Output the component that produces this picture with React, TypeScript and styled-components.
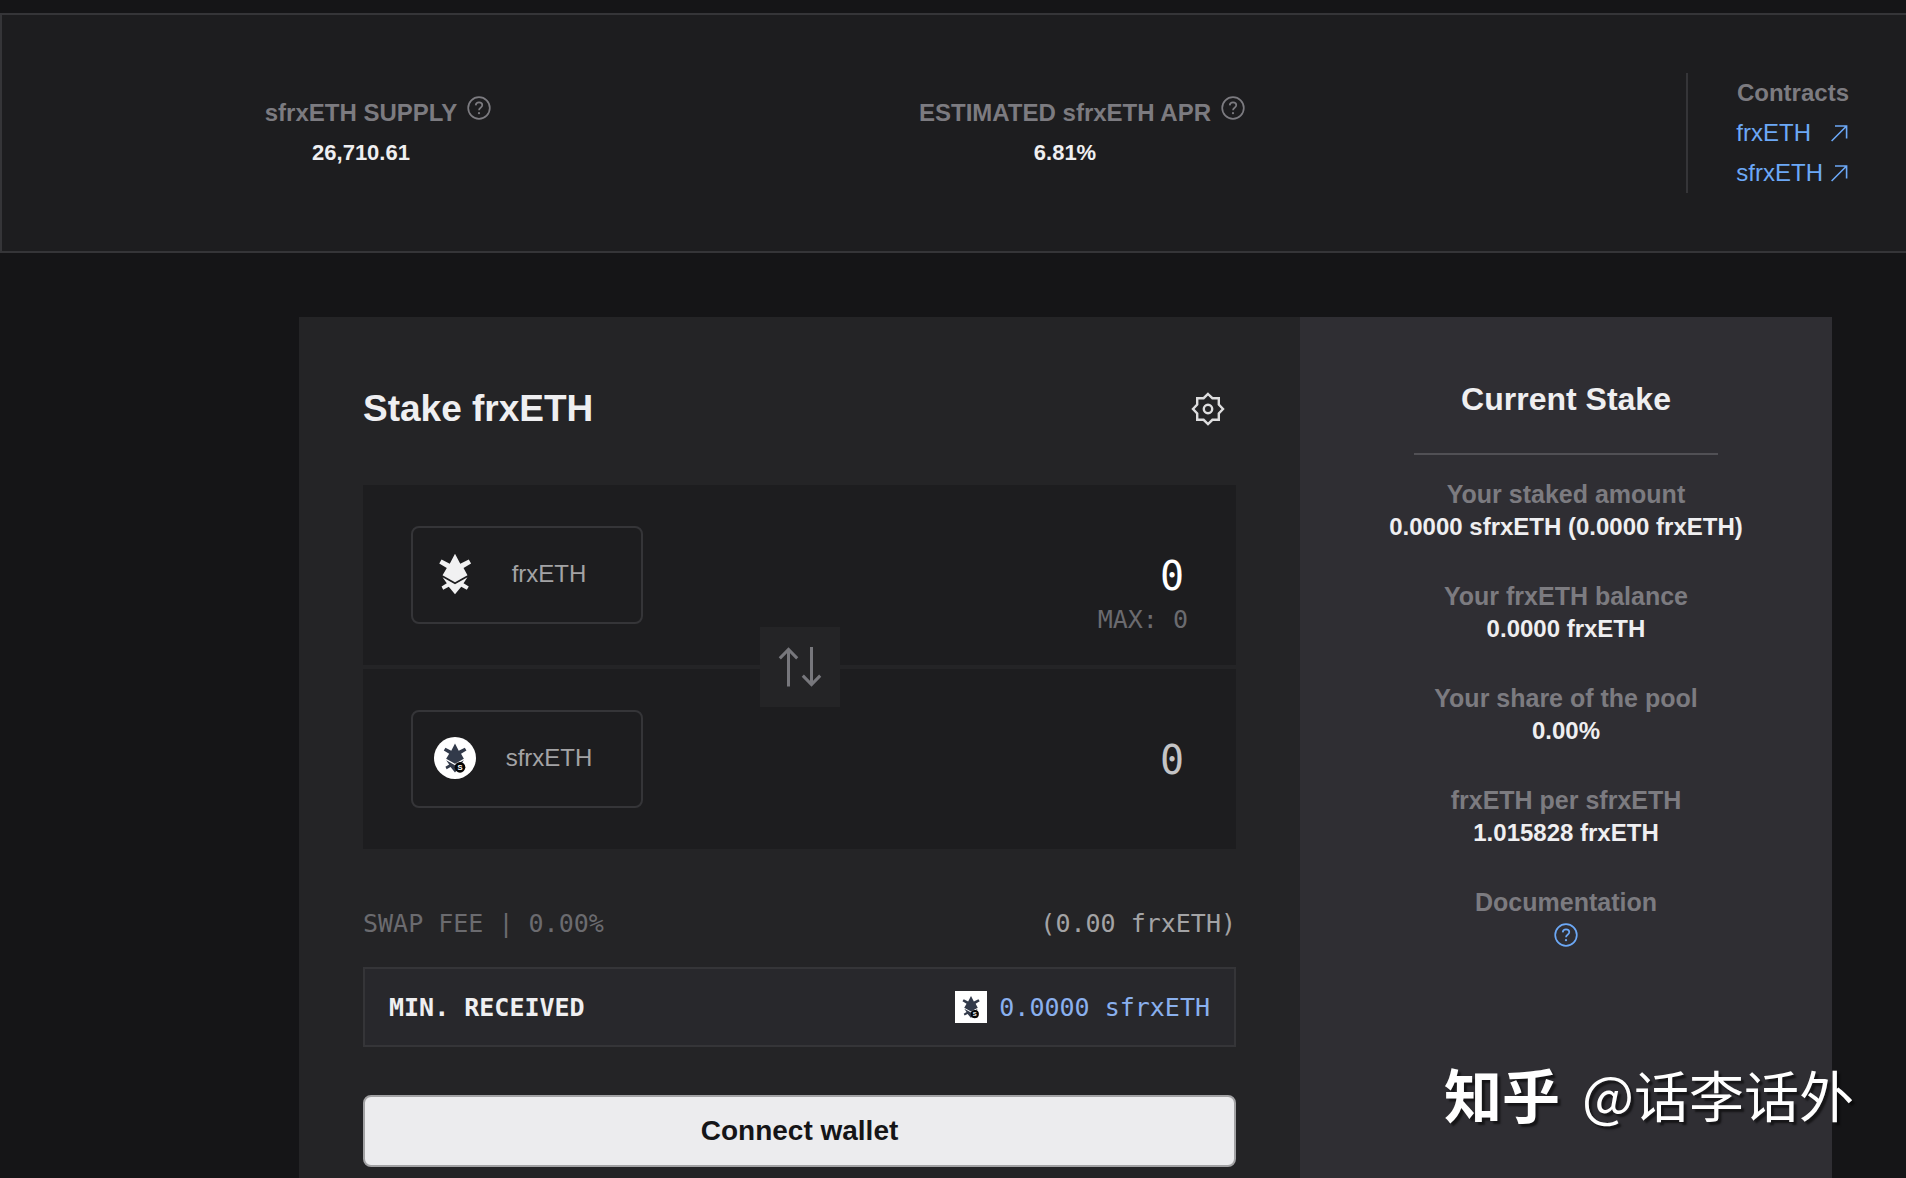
import React, { useState } from "react";
import styled, { createGlobalStyle } from "styled-components";

const sans = `"Liberation Sans", Arial, "Noto Sans CJK SC", sans-serif`;
const mono = `"DejaVu Sans Mono", "Liberation Mono", monospace`;

const color = {
  page: "#151517",
  panel: "#1d1d1f",
  card: "#242426",
  side: "#2f2e33",
  box: "#28282c",
  border: "#353538",
  rule: "#515055",
  text: "#efeff1",
  soft: "#a3a3a5",
  muted: "#7c7b80",
  dim: "#6b6b6f",
  link: "#6ca8f6",
  blue: "#8ab0ee",
};

const GlobalStyle = createGlobalStyle`
  *, *::before, *::after { box-sizing: border-box; }
  body { margin: 0; background: ${color.page}; color: ${color.text}; font-family: ${sans}; font-size: 24px; }
  h1, h2, p, dl, dt, dd { margin: 0; }
  button, input { font: inherit; color: inherit; }
  button { cursor: pointer; }
`;

const Page = styled.div`
  position: relative;
  min-height: 100vh;
  display: flex;
  flex-direction: column;
  padding-top: 13px;
  overflow: hidden;
`;

const StatsBar = styled.header`
  display: grid;
  grid-template-columns: 704fr 704fr 432fr;
  align-items: center;
  padding: 58px 57px 58px 7px;
  background: ${color.panel};
  border: solid ${color.border};
  border-width: 2px 0 2px 2px;
`;

const Stat = styled.dl`
  display: flex;
  flex-direction: column;
  align-items: center;
  line-height: 40px;
`;

const StatLabel = styled.dt`
  position: relative;
  font-weight: 700;
  color: ${color.muted};
`;

const StatHelp = styled.button`
  position: absolute;
  top: 3px;
  left: 100%;
  display: flex;
  margin-left: 10px;
  padding: 0;
  border: 0;
  background: none;
`;

const StatValue = styled.dd`
  font-size: 22px;
  font-weight: 700;
`;

const Contracts = styled.nav`
  justify-self: end;
  display: flex;
  flex-direction: column;
  padding-left: 48px;
  border-left: 2px solid ${color.border};
  line-height: 40px;
`;

const ContractsTitle = styled.span`
  font-weight: 700;
  text-align: right;
  color: ${color.muted};
`;

const ContractLink = styled.a`
  display: flex;
  align-items: center;
  justify-content: space-between;
  gap: 8px;
  color: ${color.link};
  text-decoration: none;
`;

const Card = styled.main`
  flex: 1;
  display: grid;
  grid-template-columns: 1001fr 532fr;
  margin: 64px 74px 0 299px;
`;

const StakeForm = styled.form`
  display: flex;
  flex-direction: column;
  padding: 68px 64px 11px;
  background: ${color.card};
`;

const FormHeader = styled.div`
  display: flex;
  align-items: center;
  justify-content: space-between;
  padding-right: 11px;
  margin-bottom: 52px;
`;

const Title = styled.h1`
  font-size: 37px;
  line-height: 48px;
  font-weight: 700;
`;

const IconButton = styled.button`
  display: flex;
  padding: 0;
  border: 0;
  background: none;
`;

const Swap = styled.div`
  position: relative;
  display: flex;
  flex-direction: column;
  gap: 4px;
`;

const SwapRow = styled.div`
  display: flex;
  align-items: flex-start;
  justify-content: space-between;
  min-height: 180px;
  padding: 41px 48px 0;
  background: ${color.panel};
`;

const TokenButton = styled.button`
  display: flex;
  align-items: center;
  width: 232px;
  height: 98px;
  padding: 0 20px 3px;
  border: 2px solid ${color.border};
  border-radius: 8px;
  background: none;
  color: ${color.soft};
`;

const TokenIcon = styled.span`
  display: flex;
  justify-content: center;
  width: 44px;
`;

const TokenName = styled.span`
  flex: 1;
  text-align: center;
`;

const AmountColumn = styled.div`
  display: flex;
  flex-direction: column;
  align-items: flex-end;
  gap: 2px;
  padding-top: 26px;
`;

const AmountInput = styled.input<{ $soft?: boolean }>`
  width: 320px;
  height: 48px;
  padding: 0 4px;
  border: 0;
  outline: 0;
  background: none;
  font-family: ${mono};
  font-size: 40px;
  text-align: right;
  color: ${(p) => (p.$soft ? "#c4c4c6" : "#ffffff")};
`;

const MaxButton = styled.button`
  padding: 0;
  border: 0;
  background: none;
  font-family: ${mono};
  font-size: 25px;
  line-height: 36px;
  color: ${color.dim};
`;

const FlipButton = styled.button`
  position: absolute;
  top: 50%;
  left: 50%;
  display: flex;
  align-items: center;
  justify-content: center;
  width: 80px;
  height: 80px;
  padding: 0;
  border: 0;
  background: ${color.card};
  transform: translate(-50%, -50%);
`;

const FeeRow = styled.div`
  display: flex;
  justify-content: space-between;
  margin: 57px 0 25px;
  font-family: ${mono};
  font-size: 25px;
  line-height: 36px;
  color: ${color.dim};
`;

const FeeAmount = styled.span`
  color: ${color.soft};
`;

const Received = styled.div`
  display: flex;
  align-items: center;
  justify-content: space-between;
  height: 80px;
  padding: 0 24px;
  border: 2px solid ${color.border};
  background: ${color.box};
  font-family: ${mono};
  font-size: 25px;
  font-weight: 700;
`;

const ReceivedAmount = styled.span`
  display: flex;
  align-items: center;
  gap: 12px;
  color: ${color.blue};
  font-weight: 400;
`;

const ConnectButton = styled.button`
  height: 72px;
  margin-top: 48px;
  border: 2px solid #a2a2a4;
  border-radius: 8px;
  background: #ececee;
  color: #151517;
  font-size: 28px;
  font-weight: 700;
`;

const Side = styled.aside`
  display: flex;
  flex-direction: column;
  align-items: center;
  padding: 62px 24px 24px;
  background: ${color.side};
  text-align: center;
`;

const SideTitle = styled.h2`
  font-size: 32px;
  line-height: 40px;
  font-weight: 700;
`;

const Rule = styled.hr`
  width: 63%;
  height: 2px;
  margin: 34px 0 23px;
  border: 0;
  background: ${color.rule};
`;

const Facts = styled.dl`
  display: flex;
  flex-direction: column;
  gap: 36px;
  font-weight: 700;
`;

const FactLabel = styled.dt`
  font-size: 25px;
  line-height: 32px;
  color: ${color.muted};
`;

const FactValue = styled.dd`
  display: flex;
  justify-content: center;
  line-height: 34px;
`;

const DocLink = styled.a`
  display: flex;
  align-items: center;
  height: 34px;
  color: ${color.link};
`;

const Watermark = styled.div`
  position: absolute;
  right: 52px;
  bottom: 45px;
  display: flex;
  align-items: center;
  gap: 22px;
  font-family: "Noto Sans CJK SC", sans-serif;
  font-size: 55px;
  line-height: 80px;
  color: #ffffff;
  text-shadow: 3px 3px 2px rgba(0, 0, 0, 0.55);
`;

const WatermarkBrand = styled.span`
  font-size: 58px;
  font-weight: 700;
`;

function HelpIcon({ tint = color.muted }: { tint?: string }) {
  return (
    <svg width="24" height="24" viewBox="0 0 24 24" fill="none" stroke={tint} strokeWidth="1.7">
      <circle cx="12" cy="12" r="10.8" />
      <path d="M8.7 9.3c.2-1.8 1.5-2.9 3.3-2.9s3.3 1.1 3.3 2.7c0 1.3-.7 1.9-1.7 2.6-1.1.8-1.6 1.3-1.6 2.6" />
      <circle cx="12" cy="17.2" r="1.1" fill={tint} stroke="none" />
    </svg>
  );
}

function ArrowIcon() {
  return (
    <svg width="18" height="18" viewBox="0 0 18 18" fill="none" stroke={color.link} strokeWidth="1.6">
      <path d="M.6 17 15.6 2M4 2h11.6v12.6" />
    </svg>
  );
}

function GearIcon() {
  return (
    <svg width="34" height="34" viewBox="-17 -17 34 34" fill="none" stroke="#dededf" strokeWidth="2.4">
      <path d="M0-15 4.4-10.8H10.8V-4.4L15 0 10.8 4.4V10.8H4.4L0 15-4.4 10.8H-10.8V4.4L-15 0-10.8-4.4V-10.8H-4.4Z" />
      <circle r="4.2" />
    </svg>
  );
}

function FlipIcon() {
  return (
    <svg width="48" height="48" viewBox="0 0 48 48" fill="none" stroke="#77777c" strokeWidth="3">
      <path d="M12.5 43.5V6M3.8 15.4l8.7-9 8.7 9" />
      <path d="M35.5 4v38M26.8 32.6l8.7 9 8.7-9" />
    </svg>
  );
}

function FraxShape({ fill }: { fill: string }) {
  return (
    <g fill={fill}>
      <path d="M50 2 66 33 92 20 99 32 76 46 88 68 50 89 12 68 25 46 2 32 9 20 34 33Z" />
      <path d="M12 74 50 95 88 74 76 92 92 102 86 112 69 103 50 126 31 103 14 112 9 102 25 92Z" />
    </g>
  );
}

function FrxEthLogo() {
  return (
    <svg width="34" height="42" viewBox="-1 0 102 128">
      <FraxShape fill="#f1f1f2" />
    </svg>
  );
}

function SfrxEthLogo({ size, round }: { size: number; round?: boolean }) {
  return (
    <svg width={size} height={size} viewBox="0 0 126 126">
      {round ? <circle cx="63" cy="63" r="63" fill="#fff" /> : <rect width="126" height="126" fill="#fff" />}
      <g transform="translate(28 18) scale(0.7)">
        <FraxShape fill="#323a4a" />
      </g>
      <circle cx="78" cy="91" r="16" fill="#060606" />
      <text
        x="78"
        y="99"
        fontSize="23"
        fontWeight="700"
        fontFamily="Liberation Sans, sans-serif"
        textAnchor="middle"
        fill="#fff"
      >
        S
      </text>
    </svg>
  );
}

const facts = [
  { label: "Your staked amount", value: "0.0000 sfrxETH (0.0000 frxETH)" },
  { label: "Your frxETH balance", value: "0.0000 frxETH" },
  { label: "Your share of the pool", value: "0.00%" },
  { label: "frxETH per sfrxETH", value: "1.015828 frxETH" },
];

const stats = [
  { label: "sfrxETH SUPPLY", value: "26,710.61" },
  { label: "ESTIMATED sfrxETH APR", value: "6.81%" },
];

export default function App() {
  const [amount, setAmount] = useState("0");

  return (
    <Page>
      <GlobalStyle />
      <StatsBar>
        {stats.map((s) => (
          <Stat key={s.label}>
            <StatLabel>
              {s.label}
              <StatHelp type="button" aria-label={`About ${s.label}`}>
                <HelpIcon />
              </StatHelp>
            </StatLabel>
            <StatValue>{s.value}</StatValue>
          </Stat>
        ))}
        <Contracts>
          <ContractsTitle>Contracts</ContractsTitle>
          <ContractLink href="#frxeth">
            frxETH <ArrowIcon />
          </ContractLink>
          <ContractLink href="#sfrxeth">
            sfrxETH <ArrowIcon />
          </ContractLink>
        </Contracts>
      </StatsBar>

      <Card>
        <StakeForm onSubmit={(e) => e.preventDefault()}>
          <FormHeader>
            <Title>Stake frxETH</Title>
            <IconButton type="button" aria-label="Settings">
              <GearIcon />
            </IconButton>
          </FormHeader>

          <Swap>
            <SwapRow>
              <TokenButton type="button">
                <TokenIcon>
                  <FrxEthLogo />
                </TokenIcon>
                <TokenName>frxETH</TokenName>
              </TokenButton>
              <AmountColumn>
                <AmountInput
                  aria-label="frxETH amount"
                  inputMode="decimal"
                  value={amount}
                  onChange={(e) => setAmount(e.target.value)}
                />
                <MaxButton type="button">MAX: 0</MaxButton>
              </AmountColumn>
            </SwapRow>
            <SwapRow>
              <TokenButton type="button">
                <TokenIcon>
                  <SfrxEthLogo size={42} round />
                </TokenIcon>
                <TokenName>sfrxETH</TokenName>
              </TokenButton>
              <AmountColumn>
                <AmountInput $soft aria-label="sfrxETH amount" value="0" readOnly />
              </AmountColumn>
            </SwapRow>
            <FlipButton type="button" aria-label="Switch direction">
              <FlipIcon />
            </FlipButton>
          </Swap>

          <FeeRow>
            <span>SWAP FEE | 0.00%</span>
            <FeeAmount>(0.00 frxETH)</FeeAmount>
          </FeeRow>
          <Received>
            <span>MIN. RECEIVED</span>
            <ReceivedAmount>
              <SfrxEthLogo size={32} />
              0.0000 sfrxETH
            </ReceivedAmount>
          </Received>
          <ConnectButton type="submit">Connect wallet</ConnectButton>
        </StakeForm>

        <Side>
          <SideTitle>Current Stake</SideTitle>
          <Rule />
          <Facts>
            {facts.map((f) => (
              <div key={f.label}>
                <FactLabel>{f.label}</FactLabel>
                <FactValue>{f.value}</FactValue>
              </div>
            ))}
            <div>
              <FactLabel>Documentation</FactLabel>
              <FactValue>
                <DocLink href="#docs" aria-label="Documentation">
                  <HelpIcon tint={color.link} />
                </DocLink>
              </FactValue>
            </div>
          </Facts>
        </Side>
      </Card>

      <Watermark>
        <WatermarkBrand>知乎</WatermarkBrand>
        <span>@话李话外</span>
      </Watermark>
    </Page>
  );
}
